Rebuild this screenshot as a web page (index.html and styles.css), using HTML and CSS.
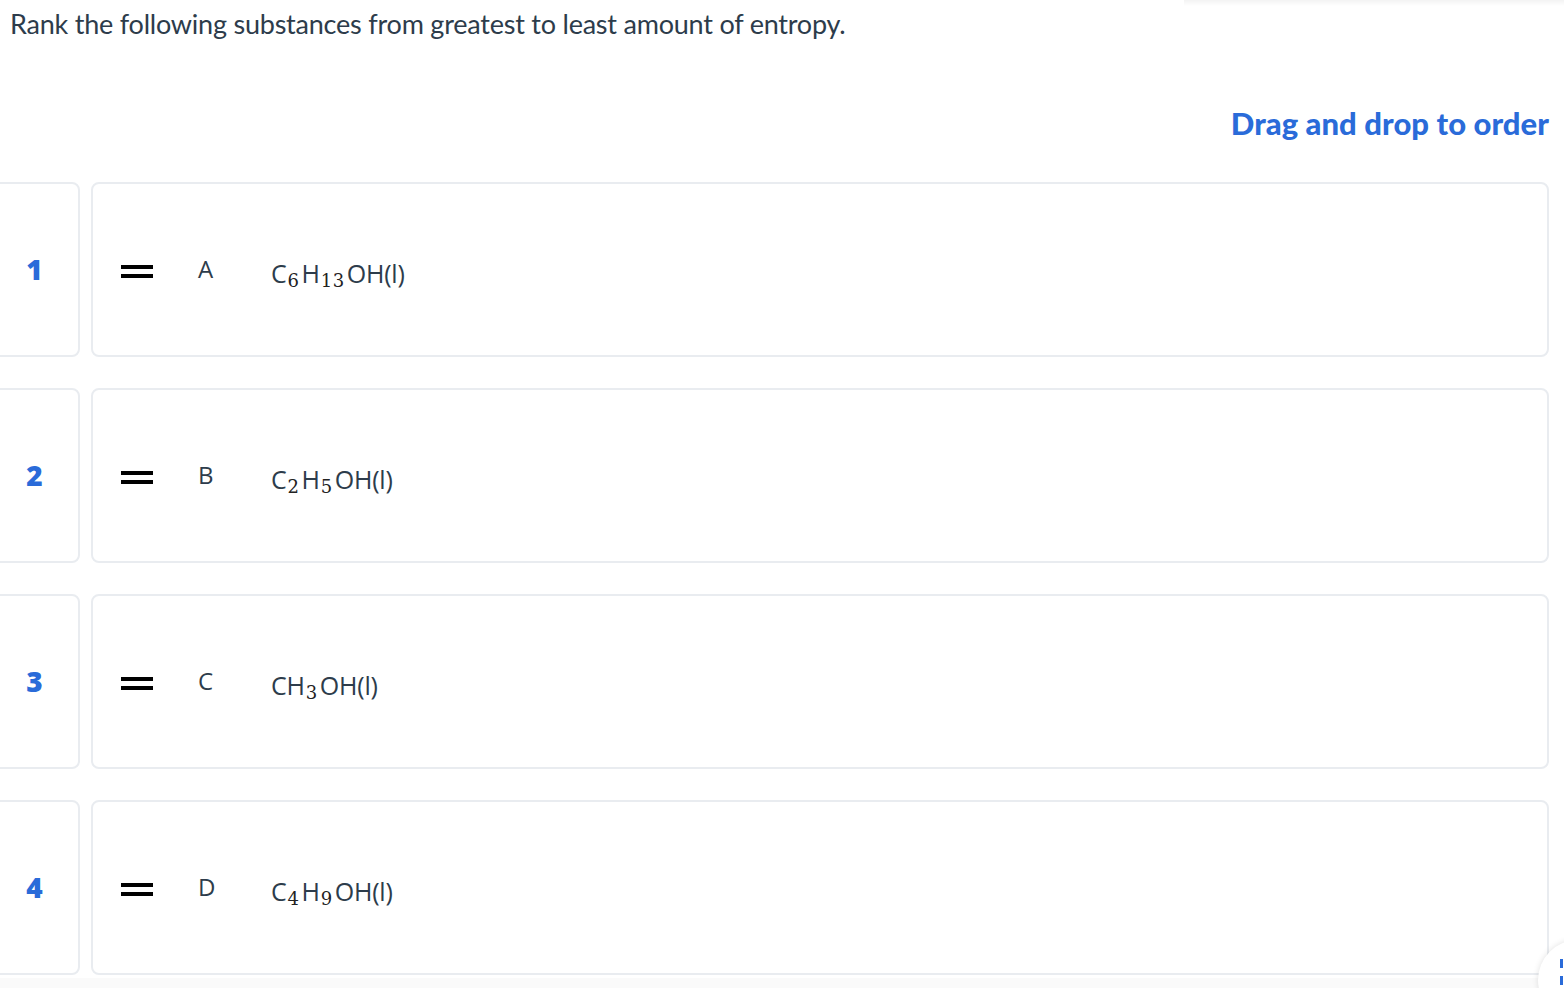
FILE: index.html
```html
<!DOCTYPE html>
<html>
<head>
<meta charset="utf-8">
<link rel="stylesheet" href="styles.css">
</head>
<body>
<div class="topshade"></div>
<main class="page">
  <p class="prompt">Rank the following substances from greatest to least amount of entropy.</p>
  <div class="hint">Drag and drop to order</div>
  <ol class="list">
    <li class="row">
      <div class="num">1</div>
      <div class="card">
        <span class="grip"></span>
        <span class="letter">A</span>
        <span class="formula">C<sub>6</sub>H<sub>13</sub>OH(l)</span>
      </div>
    </li>
    <li class="row">
      <div class="num">2</div>
      <div class="card">
        <span class="grip"></span>
        <span class="letter">B</span>
        <span class="formula">C<sub>2</sub>H<sub>5</sub>OH(l)</span>
      </div>
    </li>
    <li class="row">
      <div class="num">3</div>
      <div class="card">
        <span class="grip"></span>
        <span class="letter">C</span>
        <span class="formula">CH<sub>3</sub>OH(l)</span>
      </div>
    </li>
    <li class="row">
      <div class="num">4</div>
      <div class="card">
        <span class="grip"></span>
        <span class="letter">D</span>
        <span class="formula">C<sub>4</sub>H<sub>9</sub>OH(l)</span>
      </div>
    </li>
  </ol>
</main>
<div class="footer-band"></div>
<div class="fab"><span class="fab-bar"></span><span class="fab-bar"></span></div>
</body>
</html>
```
FILE: styles.css
```css
html, body {
  margin: 0;
  padding: 0;
  background: #ffffff;
  overflow: hidden;
}
body {
  font-family: "Lato", "Open Sans", sans-serif;
  color: #2d3c4b;
  width: 1564px;
  height: 988px;
  position: relative;
}
.topshade {
  position: absolute;
  top: 0;
  right: 0;
  width: 380px;
  height: 6px;
  background: linear-gradient(to bottom, #f3f3f3, #ffffff);
}
.page {
  padding: 0 15px 0 10px;
}
.prompt {
  margin: 0;
  padding-top: 8px;
  font-size: 27px;
  line-height: 32px;
  letter-spacing: -0.22px;
}
.hint {
  margin-top: 66px;
  text-align: right;
  color: #2a6bd9;
  font-weight: 900;
  font-size: 31px;
  line-height: 34px;
  letter-spacing: 0.05px;
}
.list {
  list-style: none;
  margin: 42px 0 0 -24px;
  padding: 0;
  display: flex;
  flex-direction: column;
  gap: 31px;
}
.row {
  display: flex;
  gap: 11px;
  height: 175px;
}
.num {
  width: 94px;
  box-sizing: border-box;
  border: 2px solid #e9ecf0;
  border-radius: 8px;
  display: flex;
  align-items: center;
  justify-content: center;
  padding-left: 3px;
  color: #2a6bd9;
  font-family: "Open Sans", sans-serif;
  font-weight: 800;
  font-size: 28px;
  padding-bottom: 1px;
}
.card {
  flex: 1;
  box-sizing: border-box;
  border: 2px solid #e9ecf0;
  border-radius: 8px;
  display: flex;
  align-items: center;
  padding-left: 28px;
}
.grip {
  width: 32px;
  height: 13px;
  box-sizing: border-box;
  border-top: 4px solid #000;
  border-bottom: 4px solid #000;
  margin-top: 4px;
}
.letter {
  margin-left: 45px;
  width: 73px;
  font-family: "Open Sans", sans-serif;
  font-size: 24px;
  margin-top: -3px;
}
.formula {
  font-family: "Open Sans", sans-serif;
  font-size: 25px;
  letter-spacing: -0.2px;
  margin-top: 6px;
}
.formula sub {
  font-family: "DejaVu Serif", serif;
  font-size: 18px;
  vertical-align: -4px;
  line-height: 0;
  color: #222;
  letter-spacing: 0.5px;
  margin: 0 2px 0 1px;
}
.footer-band {
  position: absolute;
  left: 0;
  right: 0;
  bottom: 0;
  height: 10px;
  background: #fafafa;
}
.fab {
  position: absolute;
  left: 1538px;
  top: 940px;
  width: 80px;
  height: 80px;
  border-radius: 50%;
  background: #fff;
  box-shadow: 0 0 6px rgba(0,0,0,0.12);
}
.fab-bar {
  position: absolute;
  left: 22px;
  width: 3px;
  height: 9px;
  background: #2a6bd9;
}
.fab-bar:first-child { top: 19px; }
.fab-bar:last-child { top: 36px; }
```
